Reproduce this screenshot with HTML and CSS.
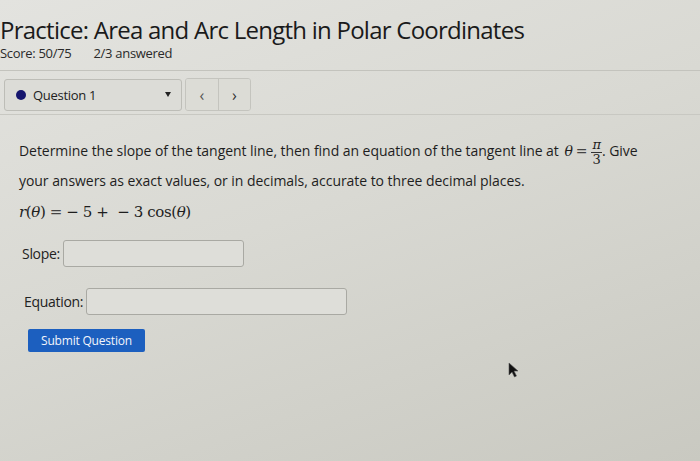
FILE: index.html
```html
<!DOCTYPE html>
<html>
<head>
<meta charset="utf-8">
<link rel="stylesheet" href="styles.css">
</head>
<body>
<div class="page">
  <h1 class="title">Practice: Area and Arc Length in Polar Coordinates</h1>
  <div class="score-row">
    <span class="score">Score: 50/75</span>
    <span class="answered">2/3 answered</span>
  </div>
  <div class="nav-bar">
    <div class="question-select">
      <span class="dot"></span>
      <span class="q-label">Question 1</span>
      <span class="caret"></span>
    </div>
    <div class="pager">
      <button class="pager-btn">&lsaquo;</button>
      <button class="pager-btn">&rsaquo;</button>
    </div>
  </div>
  <div class="question">
    <p class="prompt">Determine the slope of the tangent line, then find an equation of the tangent line at <span class="math">&theta;</span><span class="math-up">=</span><span class="frac"><span class="num">&pi;</span><span class="den">3</span></span>. Give your answers as exact values, or in decimals, accurate to three decimal places.</p>
    <p class="formula"><span class="mi">r</span>(<span class="mi">&theta;</span>) <span class="op">=</span> &minus; 5 + &nbsp;&minus; 3 cos(<span class="mi">&theta;</span>)</p>
    <div class="field field-slope">
      <label class="field-label">Slope:</label>
      <span class="input input-short"></span>
    </div>
    <div class="field field-eq">
      <label class="field-label">Equation:</label>
      <span class="input input-long"></span>
    </div>
    <button class="submit">Submit Question</button>
  </div>
  <div class="cursor">
    <svg width="12" height="16" viewBox="0 0 12 16"><path d="M1 1 L1 13 L4 10 L6.5 15 L8.5 14 L6 9 L10 9 Z" fill="#111" stroke="#555" stroke-width="0.6"/></svg>
  </div>
</div>
</body>
</html>
```

FILE: styles.css
```css
html, body {
  margin: 0;
  padding: 0;
}
body {
  width: 700px;
  height: 461px;
  overflow: hidden;
  background: linear-gradient(160deg, #e3e3df 0%, #d9d9d3 45%, #c9c9c1 100%);
  font-family: "Open Sans", "Liberation Sans", sans-serif;
  color: #222;
}
.page {
  position: relative;
  height: 461px;
}
.title {
  margin: 0;
  padding: 14px 0 0 0;
  font-weight: 400;
  font-size: 24px;
  line-height: 32px;
  letter-spacing: -0.75px;
  color: #1a1a1a;
}
.score-row {
  display: flex;
  gap: 22px;
  font-size: 13px;
  line-height: 18px;
  margin-top: -2px;
  color: #2a2a2a;
  letter-spacing: -0.3px;
}
.nav-bar {
  display: flex;
  align-items: center;
  margin-top: 8px;
  padding: 7px 0 3px 4px;
  border-top: 1px solid #c3c3bd;
  border-bottom: 1px solid #c8c8c2;
}
.question-select {
  display: flex;
  align-items: center;
  width: 178px;
  height: 32px;
  box-sizing: border-box;
  border: 1px solid #bdbdb7;
  border-radius: 3px;
  background: #dcdcd7;
  padding: 0 10px 0 11px;
}
.dot {
  width: 10px;
  height: 10px;
  border-radius: 50%;
  background: #16166e;
  margin-right: 7px;
}
.q-label {
  font-size: 13px;
  flex: 1;
  letter-spacing: -0.3px;
  color: #222;
}
.caret {
  width: 0;
  height: 0;
  border-left: 3.5px solid transparent;
  border-right: 3.5px solid transparent;
  border-top: 5px solid #222;
}
.pager {
  display: flex;
  margin-left: 3px;
  border: 1px solid #c4c4be;
  border-radius: 3px;
  height: 33px;
  box-sizing: border-box;
  overflow: hidden;
}
.pager-btn {
  width: 32px;
  border: 0;
  background: #dcdcd6;
  font-family: "Open Sans", sans-serif;
  font-size: 16px;
  color: #555;
  padding: 0;
}
.pager-btn + .pager-btn {
  border-left: 1px solid #c4c4be;
  color: #333;
}
.question {
  padding: 22px 0 0 19px;
}
.prompt {
  margin: 0;
  width: 640px;
  font-size: 14px;
  line-height: 28px;
  letter-spacing: -0.05px;
  color: #1e1e1e;
}
.math, .mi {
  font-family: "DejaVu Serif", "Liberation Serif", serif;
  font-style: italic;
}
.math {
  margin-left: 2px;
}
.math-up {
  font-family: "DejaVu Serif", serif;
  color: #444;
  margin: 0 4px 0 3px;
}
.frac {
  display: inline-flex;
  flex-direction: column;
  align-items: center;
  vertical-align: middle;
  font-family: "DejaVu Serif", serif;
  font-size: 13px;
  line-height: 14px;
}
.num {
  font-style: italic;
  border-bottom: 1px solid #333;
  padding: 0 1px;
}
.formula {
  margin: 8px 0 0 0;
  font-family: "DejaVu Serif", "Liberation Serif", serif;
  font-size: 15px;
  letter-spacing: -0.4px;
  color: #1e1e1e;
}
.op {
  color: #444;
}
.field {
  display: flex;
  align-items: center;
  font-size: 14px;
  letter-spacing: -0.3px;
  color: #222;
}
.field-slope {
  margin-top: 19px;
  padding-left: 3px;
}
.field-eq {
  margin-top: 21px;
  padding-left: 5px;
}
.field-label {
  margin-right: 3px;
}
.input {
  display: block;
  height: 27px;
  box-sizing: border-box;
  border: 1px solid #a9a9a3;
  border-radius: 3px;
  background: #dedeD9;
}
.input-short { width: 181px; }
.input-long { width: 261px; }
.submit {
  margin: 14px 0 0 9px;
  height: 23px;
  width: 117px;
  border: 0;
  border-radius: 2px;
  background: #1c5fbf;
  color: #f2f5fb;
  font-family: "Open Sans", sans-serif;
  font-size: 12px;
  letter-spacing: -0.2px;
  padding: 0;
}
.cursor {
  position: absolute;
  left: 508px;
  top: 361px;
}
```
